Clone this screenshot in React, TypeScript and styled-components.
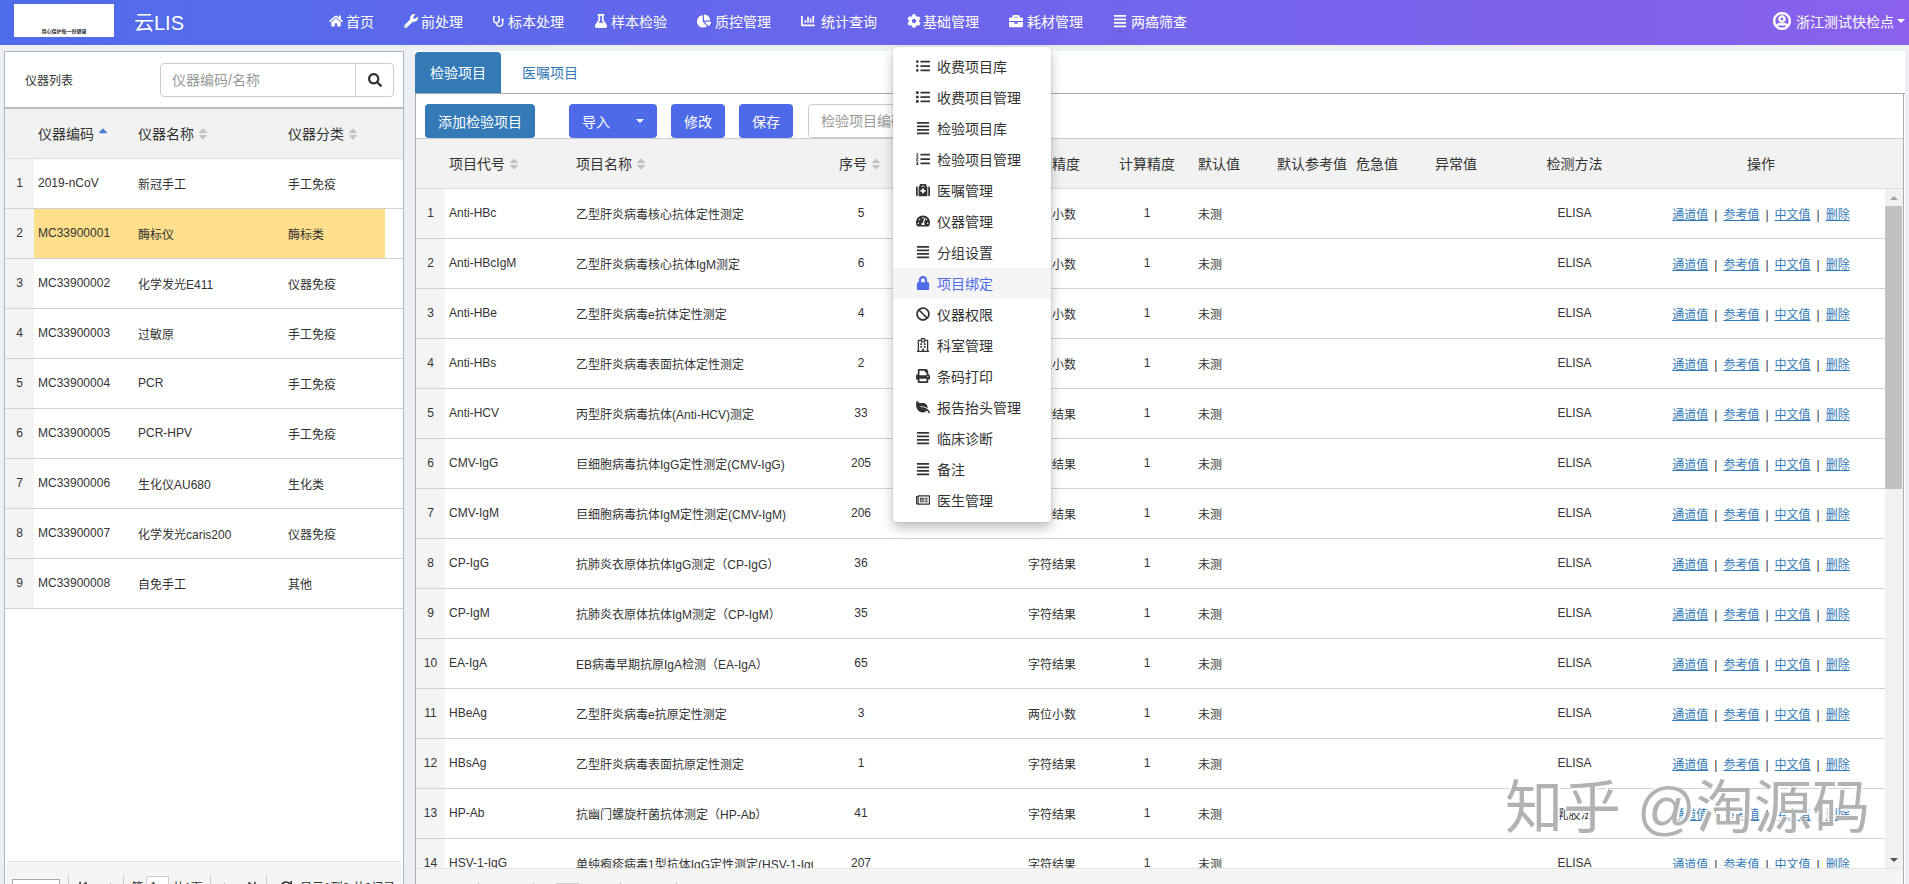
import React from 'react';
import styled, { createGlobalStyle } from 'styled-components';
import {
  FaHome,
  FaWrench,
  FaStethoscope,
  FaFlask,
  FaChartPie,
  FaChartBar,
  FaCog,
  FaBriefcase,
  FaAlignJustify,
  FaListUl,
  FaList,
  FaListOl,
  FaMedkit,
  FaTachometerAlt,
  FaLock,
  FaBan,
  FaRegHospital,
  FaPrint,
  FaLeaf,
  FaRegNewspaper,
  FaRegUserCircle,
  FaSearch,
  FaSort,
  FaSortUp,
  FaStepBackward,
  FaStepForward,
  FaCaretLeft,
  FaCaretRight,
  FaSync,
} from 'react-icons/fa';

const GlobalStyle = createGlobalStyle`
  html, body {
    margin: 0;
    padding: 0;
    overflow: hidden;
    background: #ecf0f5;
  }
  * {
    box-sizing: border-box;
  }
  body {
    font-family: "Liberation Sans", "Noto Sans CJK SC", sans-serif;
    color: #333;
  }
`;

const Page = styled.div`
  position: relative;
  width: 1909px;
  height: 884px;
  overflow: hidden;
  display: flex;
  flex-direction: column;
`;

// Top bar
const Header = styled.header`
  height: 45px;
  flex: none;
  display: flex;
  align-items: center;
  padding: 0 4px 0 14px;
  background: linear-gradient(to right, #4e6beb, #8a60ec);
  color: #fff;
`;

const Logo = styled.div`
  width: 100px;
  height: 33px;
  margin-bottom: 4px;
  background: #fff;
  display: flex;
  align-items: flex-end;
  justify-content: center;
  padding-bottom: 3px;
  font-size: 5px;
  line-height: 6px;
  font-weight: 700;
  color: #333;
`;

const Brand = styled.div`
  width: 180px;
  margin: 0 0 2px 20px;
  font-size: 20px;
`;

const Nav = styled.nav`
  display: flex;
  height: 45px;
`;

const NavItem = styled.div`
  position: relative;
  display: flex;
  align-items: center;
  padding: 0 15px 3px;
  font-size: 14px;
`;

const NavIcon = styled.span<{ $w: number; $size?: number }>`
  width: ${(p) => p.$w}px;
  flex: none;
  display: flex;
  align-items: center;
  font-size: ${(p) => p.$size ?? 14}px;
`;

const UserMenu = styled.div`
  margin-left: auto;
  padding-bottom: 3px;
  display: flex;
  align-items: center;
  font-size: 14px;
  svg {
    font-size: 18px;
    margin-right: 5px;
    stroke: currentColor;
    stroke-width: 24px;
  }
`;

const Caret = styled.i`
  display: inline-block;
  margin-left: 3px;
  border-top: 4px solid currentColor;
  border-left: 4px solid transparent;
  border-right: 4px solid transparent;
`;

// Dropdown of the 基础管理 entry
const Menu = styled.ul`
  position: absolute;
  z-index: 10;
  top: 47px;
  left: 1px;
  width: 158px;
  margin: 0;
  padding: 4px 0 6px;
  list-style: none;
  background: #fff;
  border-radius: 4px;
  box-shadow: 0 6px 12px rgba(0, 0, 0, 0.25), 0 0 2px rgba(0, 0, 0, 0.2);
`;

const MenuItem = styled.li<{ $active?: boolean }>`
  height: 31px;
  display: flex;
  align-items: center;
  padding: 0 0 1px 23px;
  font-size: 14px;
  color: ${(p) => (p.$active ? '#4e6ae8' : '#333')};
  background: ${(p) => (p.$active ? '#f5f5f5' : 'transparent')};
`;

const MenuIcon = styled.span<{ $flip?: boolean }>`
  width: 21px;
  flex: none;
  display: flex;
  align-items: center;
  font-size: 14px;
  svg {
    transform: ${(p) => (p.$flip ? 'scaleX(-1)' : 'none')};
  }
`;

// Main area
const Main = styled.main`
  flex: 1;
  min-height: 0;
  display: flex;
  gap: 11px;
  padding: 6px 0 0 4px;
`;

const LeftPanel = styled.section`
  width: 400px;
  flex: none;
  display: flex;
  flex-direction: column;
  background: #fff;
  border: 1px solid #b4b4b4;
  border-bottom: 0;
`;

const ListTitleRow = styled.div`
  height: 57px;
  flex: none;
  display: flex;
  align-items: center;
  padding: 0 9px 0 20px;
  border-bottom: 2px solid #bbb;
  font-size: 12px;
`;

const SearchGroup = styled.div`
  width: 234px;
  height: 34px;
  margin-left: auto;
  display: flex;
  border: 1px solid #ccc;
  border-radius: 4px;
`;

const SearchInput = styled.input`
  flex: 1;
  min-width: 0;
  padding: 0 11px;
  border: 0;
  border-radius: 4px 0 0 4px;
  font: inherit;
  font-size: 14px;
  &::placeholder {
    color: #999;
  }
`;

const SearchButton = styled.button`
  width: 38px;
  padding: 0;
  display: flex;
  align-items: center;
  justify-content: center;
  background: #fff;
  border: 0;
  border-left: 1px solid #ccc;
  border-radius: 0 4px 4px 0;
  color: #333;
  font-size: 14px;
`;

const Table = styled.table`
  width: 100%;
  table-layout: fixed;
  border-collapse: separate;
  border-spacing: 0;
`;

const HeadCell = styled.th<{ $align?: string }>`
  height: 50px;
  padding: 0 4px 1px;
  background: #f2f2f2;
  border-bottom: 1px solid #ddd;
  font-size: 14px;
  font-weight: 400;
  text-align: ${(p) => p.$align || 'left'};
  white-space: nowrap;
  svg {
    font-size: 14px;
    margin-left: 2px;
    vertical-align: -2px;
    color: #c4c4c4;
  }
`;

const ActiveSort = styled(FaSortUp)`
  && {
    color: #4e7fd0;
  }
`;

const Row = styled.tr<{ $selected?: boolean }>`
  td {
    background: ${(p) => (p.$selected ? '#ffdf8c' : '#fff')};
  }
  td.index {
    background: #f4f4f4;
  }
  td.filler {
    background: #fff;
  }
`;

const Cell = styled.td<{ $align?: string; $inset?: number }>`
  height: 50px;
  padding: 0 4px 1px ${(p) => p.$inset ?? 4}px;
  border-bottom: 1px solid #d2d2d2;
  font-size: 12px;
  text-align: ${(p) => p.$align || 'left'};
`;

const CellText = styled.div`
  overflow: hidden;
  white-space: nowrap;
`;

const Spacer = styled.div`
  flex: 1;
  min-height: 0;
`;

// Pagination bars, only their top edge is on screen
const Pager = styled.div<{ $top: number; $height: number; $left: number }>`
  height: ${(p) => p.$height}px;
  flex: none;
  overflow: hidden;
  display: flex;
  align-items: flex-start;
  padding: ${(p) => p.$top}px 0 0 ${(p) => p.$left}px;
  background: #f5f5f5;
  border-top: 1px solid #e4e4e4;
  font-size: 12px;
`;

const LeftPager = styled(Pager)`
  margin: 0 2px;
`;

const PageSize = styled.div`
  width: 48px;
  height: 30px;
  margin: 4px 8px 0 0;
  padding: 2px 7px;
  flex: none;
  background: #fff;
  border: 1px solid #aaa;
  font-size: 12px;
`;

const PagerGroup = styled.div<{ $w: number; $gap?: number }>`
  width: ${(p) => p.$w}px;
  height: 30px;
  flex: none;
  display: flex;
  align-items: flex-start;
  justify-content: center;
  gap: ${(p) => p.$gap ?? 14}px;
  padding-top: 6px;
  border-left: 1px solid #ccc;
  line-height: 14px;
  svg {
    font-size: 12px;
    color: #444;
  }
`;

const PageInput = styled.div`
  width: 23px;
  height: 26px;
  margin: -5px 3px 0 3px;
  padding: 3px;
  background: #fff;
  border: 1px solid #ccc;
`;

const CountText = styled.div`
  margin-left: 13px;
  padding-top: 6px;
  display: flex;
  gap: 8px;
  line-height: 14px;
  white-space: nowrap;
  svg {
    font-size: 12px;
    color: #333;
  }
`;

const RightPanel = styled.section`
  width: 1490px;
  flex: none;
  display: flex;
  flex-direction: column;
  background: #fff;
`;

const TabBar = styled.div`
  height: 43px;
  flex: none;
  display: flex;
  align-items: flex-end;
  gap: 6px;
  padding-top: 1px;
  border-bottom: 1px solid #aaa;
`;

const Tab = styled.div<{ $active?: boolean }>`
  height: 41px;
  display: flex;
  align-items: center;
  padding: 0 15px 2px;
  border-radius: 4px 4px 0 0;
  font-size: 14px;
  color: ${(p) => (p.$active ? '#fff' : '#337ab7')};
  background: ${(p) => (p.$active ? '#337ab7' : 'transparent')};
`;

const TabContent = styled.div`
  flex: 1;
  min-height: 0;
  display: flex;
  flex-direction: column;
  border-left: 1px solid #aaa;
  border-right: 1px solid #aaa;
  margin-right: 1px;
`;

const Toolbar = styled.div`
  height: 44px;
  flex: none;
  display: flex;
  align-items: flex-start;
  gap: 14px;
  padding: 10px 0 0 9px;
`;

const Button = styled.button<{ $color?: string; $gapBefore?: number; $w?: number }>`
  height: 34px;
  width: ${(p) => (p.$w ? `${p.$w}px` : 'auto')};
  margin-left: ${(p) => p.$gapBefore ?? 0}px;
  padding: 0 13px;
  display: flex;
  align-items: center;
  justify-content: space-between;
  border: 0;
  border-radius: 4px;
  background: ${(p) => p.$color || '#4e6ae8'};
  color: #fff;
  font: inherit;
  font-size: 14px;
`;

const ItemSearch = styled.input`
  width: 200px;
  height: 34px;
  margin-left: 1px;
  padding: 0 12px;
  border: 1px solid #ccc;
  border-radius: 4px;
  font: inherit;
  font-size: 14px;
  &::placeholder {
    color: #999;
  }
`;

const HeadWrap = styled.div`
  flex: none;
  border-top: 1px solid #ccc;
`;

const BodyWrap = styled.div`
  flex: 1;
  min-height: 0;
  display: flex;
`;

const BodyScroll = styled.div`
  flex: 1;
  min-width: 0;
  overflow: hidden;
`;

const ScrollTrack = styled.div`
  width: 18px;
  flex: none;
  display: flex;
  flex-direction: column;
  background: #f1f1f1;
  border-right: 1px solid #f1f1f1;
`;

const ScrollArrow = styled.div<{ $down?: boolean }>`
  height: 17px;
  flex: none;
  display: flex;
  align-items: center;
  justify-content: center;
  &::before {
    content: '';
    border-left: 4px solid transparent;
    border-right: 4px solid transparent;
    border-top: ${(p) => (p.$down ? '4px solid #505050' : '0')};
    border-bottom: ${(p) => (p.$down ? '0' : '4px solid #a3a3a3')};
  }
`;

const ScrollThumb = styled.div`
  height: 283px;
  flex: none;
  background: #c1c1c1;
`;

const ActionLink = styled.a`
  color: #337ab7;
  text-decoration: underline;
`;

const ActionSep = styled.span`
  display: inline-block;
  margin: 0 6px;
  color: #333;
`;

const Watermark = styled.div`
  position: absolute;
  left: 1505px;
  top: 768px;
  font-size: 58px;
  line-height: 80px;
  white-space: nowrap;
  color: rgba(170, 170, 170, 0.9);
  text-shadow: 2px 2px 0 rgba(255, 255, 255, 0.9), -2px -1px 0 rgba(255, 255, 255, 0.9);
  pointer-events: none;
`;

const navItems: { label: string; icon: React.ReactNode; w: number; size?: number; menu?: boolean }[] = [
  { label: '首页', icon: <FaHome />, w: 17 },
  { label: '前处理', icon: <FaWrench />, w: 17 },
  { label: '标本处理', icon: <FaStethoscope />, w: 15, size: 11 },
  { label: '样本检验', icon: <FaFlask />, w: 17 },
  { label: '质控管理', icon: <FaChartPie />, w: 18 },
  { label: '统计查询', icon: <FaChartBar />, w: 20 },
  { label: '基础管理', icon: <FaCog />, w: 16, menu: true },
  { label: '耗材管理', icon: <FaBriefcase />, w: 18 },
  { label: '两癌筛查', icon: <FaAlignJustify />, w: 18 },
];

const menuItems: { label: string; icon: React.ReactNode; active?: boolean; flip?: boolean }[] = [
  { label: '收费项目库', icon: <FaListUl /> },
  { label: '收费项目管理', icon: <FaList /> },
  { label: '检验项目库', icon: <FaAlignJustify /> },
  { label: '检验项目管理', icon: <FaListOl /> },
  { label: '医嘱管理', icon: <FaMedkit /> },
  { label: '仪器管理', icon: <FaTachometerAlt /> },
  { label: '分组设置', icon: <FaAlignJustify /> },
  { label: '项目绑定', icon: <FaLock />, active: true },
  { label: '仪器权限', icon: <FaBan /> },
  { label: '科室管理', icon: <FaRegHospital /> },
  { label: '条码打印', icon: <FaPrint /> },
  { label: '报告抬头管理', icon: <FaLeaf />, flip: true },
  { label: '临床诊断', icon: <FaAlignJustify /> },
  { label: '备注', icon: <FaAlignJustify /> },
  { label: '医生管理', icon: <FaRegNewspaper /> },
];

const devices = [
  ['2019-nCoV', '新冠手工', '手工免疫'],
  ['MC33900001', '酶标仪', '酶标类'],
  ['MC33900002', '化学发光E411', '仪器免疫'],
  ['MC33900003', '过敏原', '手工免疫'],
  ['MC33900004', 'PCR', '手工免疫'],
  ['MC33900005', 'PCR-HPV', '手工免疫'],
  ['MC33900006', '生化仪AU680', '生化类'],
  ['MC33900007', '化学发光caris200', '仪器免疫'],
  ['MC33900008', '自免手工', '其他'],
];

const items = [
  ['Anti-HBc', '乙型肝炎病毒核心抗体定性测定', '5', '两位小数', 'ELISA'],
  ['Anti-HBcIgM', '乙型肝炎病毒核心抗体IgM测定', '6', '两位小数', 'ELISA'],
  ['Anti-HBe', '乙型肝炎病毒e抗体定性测定', '4', '两位小数', 'ELISA'],
  ['Anti-HBs', '乙型肝炎病毒表面抗体定性测定', '2', '两位小数', 'ELISA'],
  ['Anti-HCV', '丙型肝炎病毒抗体(Anti-HCV)测定', '33', '字符结果', 'ELISA'],
  ['CMV-IgG', '巨细胞病毒抗体IgG定性测定(CMV-IgG)', '205', '字符结果', 'ELISA'],
  ['CMV-IgM', '巨细胞病毒抗体IgM定性测定(CMV-IgM)', '206', '字符结果', 'ELISA'],
  ['CP-IgG', '抗肺炎衣原体抗体IgG测定（CP-IgG）', '36', '字符结果', 'ELISA'],
  ['CP-IgM', '抗肺炎衣原体抗体IgM测定（CP-IgM）', '35', '字符结果', 'ELISA'],
  ['EA-IgA', 'EB病毒早期抗原IgA检测（EA-IgA）', '65', '字符结果', 'ELISA'],
  ['HBeAg', '乙型肝炎病毒e抗原定性测定', '3', '两位小数', 'ELISA'],
  ['HBsAg', '乙型肝炎病毒表面抗原定性测定', '1', '字符结果', 'ELISA'],
  ['HP-Ab', '抗幽门螺旋杆菌抗体测定（HP-Ab）', '41', '字符结果', '乳胶法'],
  ['HSV-1-IgG', '单纯疱疹病毒1型抗体IgG定性测定(HSV-1-IgG)', '207', '字符结果', 'ELISA'],
];

const deviceCols = [29, 100, 150, 101, 18];
const itemCols = [29, 127, 245, 88, 99, 96, 94, 79, 79, 79, 99, 89];

const Cols: React.FC<{ widths: number[] }> = ({ widths }) => (
  <colgroup>
    {widths.map((w, i) => (
      <col key={i} style={{ width: w }} />
    ))}
  </colgroup>
);

const PagerContent: React.FC = () => (
  <>
    <PageSize>50</PageSize>
    <PagerGroup $w={55}>
      <FaStepBackward />
      <FaCaretLeft />
    </PagerGroup>
    <PagerGroup $w={87} $gap={0}>
      第<PageInput>1</PageInput>共1页
    </PagerGroup>
    <PagerGroup $w={56}>
      <FaCaretRight />
      <FaStepForward />
    </PagerGroup>
    <PagerGroup $w={1} />
    <CountText>
      <FaSync />
      显示1到9,共9记录
    </CountText>
  </>
);

const App: React.FC = () => {
  return (
    <Page>
      <GlobalStyle />
      <Header>
        <Logo>用心保护每一份健康</Logo>
        <Brand>云LIS</Brand>
        <Nav>
          {navItems.map((item) => (
            <NavItem key={item.label}>
              <NavIcon $w={item.w} $size={item.size}>
                {item.icon}
              </NavIcon>
              {item.label}
              {item.menu && (
                <Menu>
                  {menuItems.map((m) => (
                    <MenuItem key={m.label} $active={m.active}>
                      <MenuIcon $flip={m.flip}>{m.icon}</MenuIcon>
                      {m.label}
                    </MenuItem>
                  ))}
                </Menu>
              )}
            </NavItem>
          ))}
        </Nav>
        <UserMenu>
          <FaRegUserCircle />
          浙江测试快检点
          <Caret />
        </UserMenu>
      </Header>

      <Main>
        <LeftPanel>
          <ListTitleRow>
            仪器列表
            <SearchGroup>
              <SearchInput placeholder="仪器编码/名称" />
              <SearchButton>
                <FaSearch />
              </SearchButton>
            </SearchGroup>
          </ListTitleRow>
          <Table>
            <Cols widths={deviceCols} />
            <thead>
              <tr>
                <HeadCell />
                <HeadCell>
                  仪器编码
                  <ActiveSort />
                </HeadCell>
                <HeadCell>
                  仪器名称
                  <FaSort />
                </HeadCell>
                <HeadCell>
                  仪器分类
                  <FaSort />
                </HeadCell>
                <HeadCell />
              </tr>
            </thead>
            <tbody>
              {devices.map((d, i) => (
                <Row key={d[0]} $selected={i === 1}>
                  <Cell className="index" $align="center">
                    {i + 1}
                  </Cell>
                  <Cell>{d[0]}</Cell>
                  <Cell>{d[1]}</Cell>
                  <Cell>{d[2]}</Cell>
                  <Cell className="filler" />
                </Row>
              ))}
            </tbody>
          </Table>
          <Spacer />
          <LeftPager $top={13} $height={23} $left={5}>
            <PagerContent />
          </LeftPager>
        </LeftPanel>

        <RightPanel>
          <TabBar>
            <Tab $active>检验项目</Tab>
            <Tab>医嘱项目</Tab>
          </TabBar>
          <TabContent>
            <Toolbar>
              <Button $color="#337ab7">添加检验项目</Button>
              <Button $gapBefore={20} $w={88}>
                导入
                <Caret />
              </Button>
              <Button>修改</Button>
              <Button>保存</Button>
              <ItemSearch placeholder="检验项目编码/名称" />
            </Toolbar>
            <HeadWrap>
              <Table>
                <Cols widths={[...itemCols, 284]} />
                <thead>
                  <tr>
                    <HeadCell />
                    <HeadCell>
                      项目代号
                      <FaSort />
                    </HeadCell>
                    <HeadCell>
                      项目名称
                      <FaSort />
                    </HeadCell>
                    <HeadCell $align="center">
                      序号
                      <FaSort />
                    </HeadCell>
                    <HeadCell />
                    <HeadCell $align="center">结果精度</HeadCell>
                    <HeadCell $align="center">计算精度</HeadCell>
                    <HeadCell>默认值</HeadCell>
                    <HeadCell>默认参考值</HeadCell>
                    <HeadCell>危急值</HeadCell>
                    <HeadCell>异常值</HeadCell>
                    <HeadCell $align="center">检测方法</HeadCell>
                    <HeadCell $align="center">操作</HeadCell>
                  </tr>
                </thead>
              </Table>
            </HeadWrap>
            <BodyWrap>
              <BodyScroll>
                <Table>
                  <Cols widths={[...itemCols, 266]} />
                  <tbody>
                    {items.map((it, i) => (
                      <Row key={it[0]}>
                        <Cell className="index" $align="center">
                          {i + 1}
                        </Cell>
                        <Cell>{it[0]}</Cell>
                        <Cell>
                          <CellText>{it[1]}</CellText>
                        </Cell>
                        <Cell $align="center">{it[2]}</Cell>
                        <Cell />
                        <Cell $align="center">{it[3]}</Cell>
                        <Cell $align="center">1</Cell>
                        <Cell>未测</Cell>
                        <Cell />
                        <Cell />
                        <Cell />
                        <Cell $align="center">{it[4]}</Cell>
                        <Cell $align="center" $inset={22}>
                          <ActionLink>通道值</ActionLink>
                          <ActionSep>|</ActionSep>
                          <ActionLink>参考值</ActionLink>
                          <ActionSep>|</ActionSep>
                          <ActionLink>中文值</ActionLink>
                          <ActionSep>|</ActionSep>
                          <ActionLink>删除</ActionLink>
                        </Cell>
                      </Row>
                    ))}
                  </tbody>
                </Table>
              </BodyScroll>
              <ScrollTrack>
                <ScrollArrow />
                <ScrollThumb />
                <Spacer />
                <ScrollArrow $down />
              </ScrollTrack>
            </BodyWrap>
            <Pager $top={13} $height={16} $left={6}>
              <PagerContent />
            </Pager>
          </TabContent>
        </RightPanel>
      </Main>
      <Watermark>知乎 @淘源码</Watermark>
    </Page>
  );
};

export default App;
